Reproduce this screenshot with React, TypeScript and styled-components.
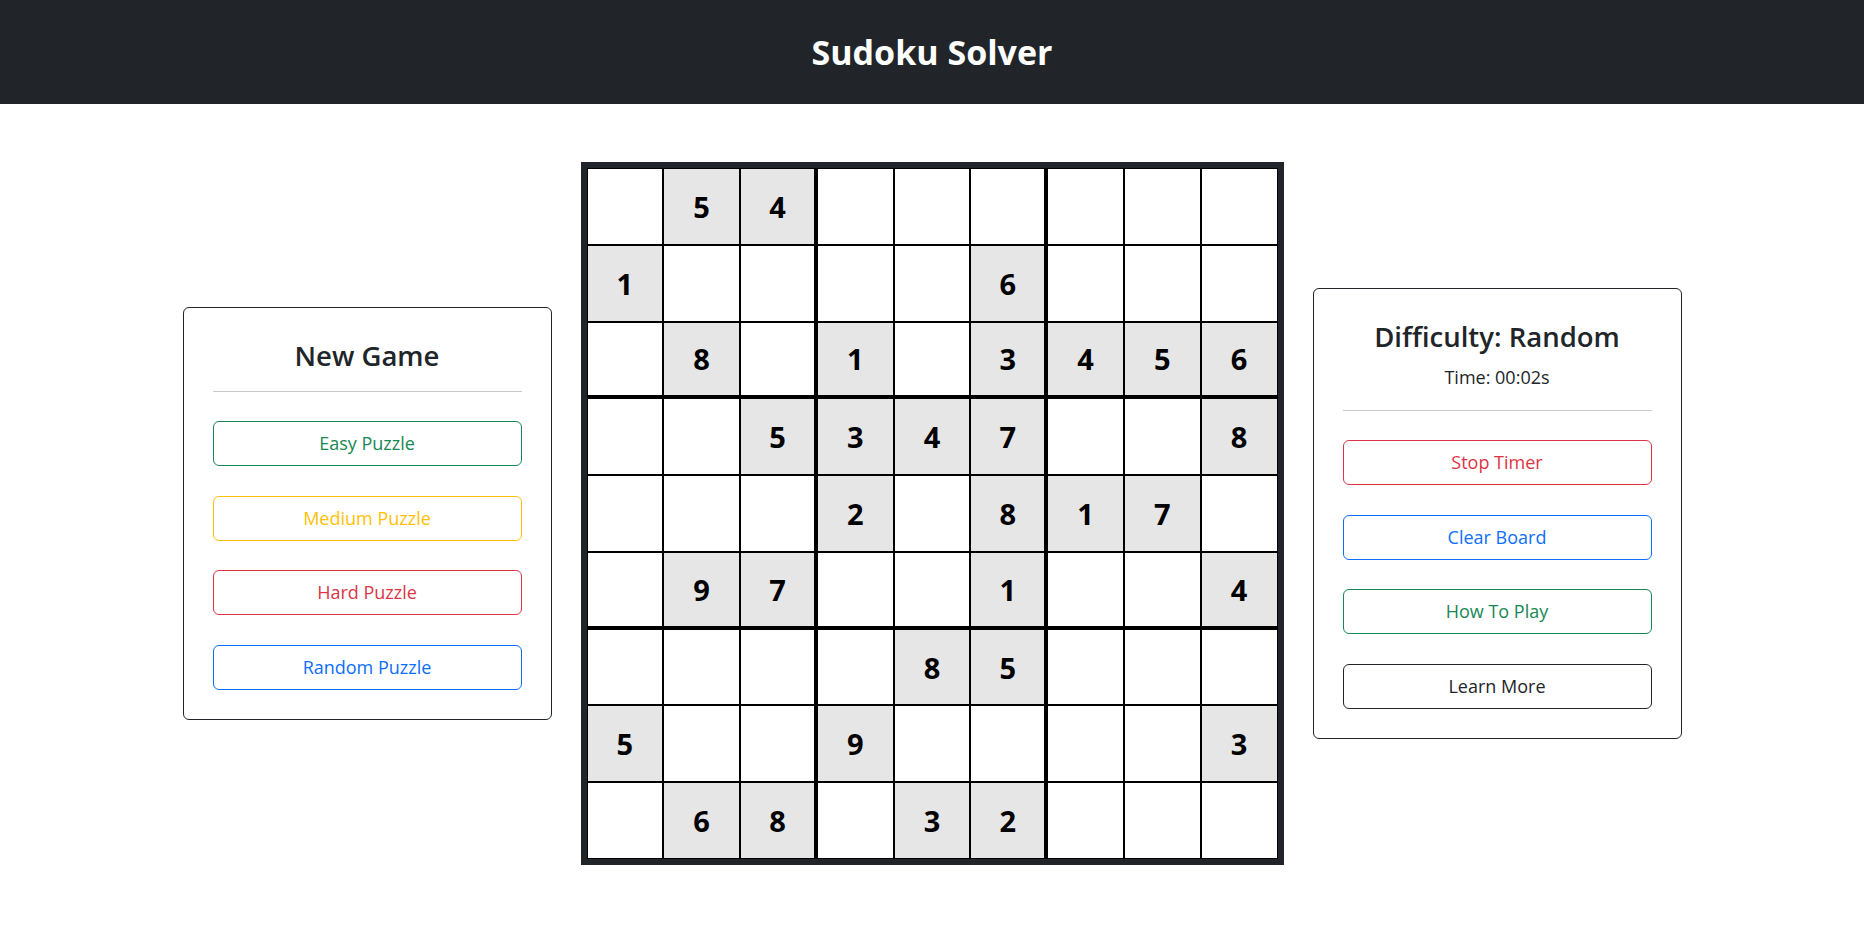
import React, { FC } from "react"
import styled, { createGlobalStyle } from "styled-components"

const GlobalStyle = createGlobalStyle`
  body {
    margin: 0;
    font-family: "Open Sans", "Noto Sans", sans-serif;
    color: #212529;
    background: #fff;
  }
`

const puzzle: number[][] = [
  [0, 5, 4, 0, 0, 0, 0, 0, 0],
  [1, 0, 0, 0, 0, 6, 0, 0, 0],
  [0, 8, 0, 1, 0, 3, 4, 5, 6],
  [0, 0, 5, 3, 4, 7, 0, 0, 8],
  [0, 0, 0, 2, 0, 8, 1, 7, 0],
  [0, 9, 7, 0, 0, 1, 0, 0, 4],
  [0, 0, 0, 0, 8, 5, 0, 0, 0],
  [5, 0, 0, 9, 0, 0, 0, 0, 3],
  [0, 6, 8, 0, 3, 2, 0, 0, 0],
]

type Variant = "success" | "warning" | "danger" | "primary" | "dark"

const colors: Record<Variant, string> = {
  success: "#198754",
  warning: "#ffc107",
  danger: "#dc3545",
  primary: "#0d6efd",
  dark: "#212529",
}

const App: FC = () => {
  return (
    <>
      <GlobalStyle />
      <Header>
        <Title>Sudoku Solver</Title>
      </Header>
      <Main>
        <Card>
          <CardTitle>New Game</CardTitle>
          <Divider />
          <ButtonStack>
            <OutlineButton $variant="success">Easy Puzzle</OutlineButton>
            <OutlineButton $variant="warning">Medium Puzzle</OutlineButton>
            <OutlineButton $variant="danger">Hard Puzzle</OutlineButton>
            <OutlineButton $variant="primary">Random Puzzle</OutlineButton>
          </ButtonStack>
        </Card>

        <Board>
          {puzzle.map((row, r) =>
            row.map((value, c) => (
              <Cell key={`${r}-${c}`} $given={value !== 0} $boxRight={c === 2 || c === 5} $boxBottom={r === 2 || r === 5}>
                {value !== 0 ? value : ""}
              </Cell>
            ))
          )}
        </Board>

        <Card>
          <CardTitle>Difficulty: Random</CardTitle>
          <Timer>Time: 00:02s</Timer>
          <Divider />
          <ButtonStack>
            <OutlineButton $variant="danger">Stop Timer</OutlineButton>
            <OutlineButton $variant="primary">Clear Board</OutlineButton>
            <OutlineButton $variant="success">How To Play</OutlineButton>
            <OutlineButton $variant="dark">Learn More</OutlineButton>
          </ButtonStack>
        </Card>
      </Main>
    </>
  )
}

export default App

const Header = styled.header`
  height: 104px;
  background: #212529;
  display: flex;
  align-items: center;
  justify-content: center;
`

const Title = styled.h1`
  margin: 0;
  color: #fff;
  font-size: 34px;
  font-weight: 700;
  line-height: 1.2;
`

const Main = styled.main`
  display: flex;
  justify-content: center;
  align-items: center;
  gap: 29px;
  padding: 58px 0 40px;
`

const Card = styled.section`
  box-sizing: border-box;
  width: 369px;
  border: 1px solid #212529;
  border-radius: 6px;
  padding: 29px;
  display: flex;
  flex-direction: column;
  text-align: center;
`

const CardTitle = styled.h2`
  margin: 0;
  font-size: 27.5px;
  font-weight: 600;
  line-height: 38px;
`

const Timer = styled.p`
  margin: 8px 0 3px;
  font-size: 18px;
  line-height: 27px;
`

const Divider = styled.hr`
  width: 100%;
  margin: 16px 0 29px;
  border: 0;
  border-top: 1px solid #c9c9c9;
`

const ButtonStack = styled.div`
  display: flex;
  flex-direction: column;
  gap: 29.5px;
`

const OutlineButton = styled.button<{ $variant: Variant }>`
  box-sizing: border-box;
  height: 45px;
  width: 100%;
  padding: 8px 12px;
  font-family: inherit;
  font-size: 18px;
  line-height: 27px;
  color: ${p => colors[p.$variant]};
  background: #fff;
  border: 1px solid ${p => colors[p.$variant]};
  border-radius: 6px;
  cursor: pointer;
`

const Board = styled.div`
  display: grid;
  grid-template-columns: repeat(9, 1fr);
  grid-template-rows: repeat(9, 1fr);
  width: 691px;
  height: 691px;
  border: 6px solid #212529;
`

const Cell = styled.div<{ $given: boolean; $boxRight: boolean; $boxBottom: boolean }>`
  box-sizing: border-box;
  display: flex;
  align-items: center;
  justify-content: center;
  border: 1px solid #000;
  border-right-width: ${p => (p.$boxRight ? "3px" : "1px")};
  border-bottom-width: ${p => (p.$boxBottom ? "3px" : "1px")};
  background: ${p => (p.$given ? "#e6e6e6" : "#fff")};
  color: #000;
  font-size: 29px;
  font-weight: 700;
`
